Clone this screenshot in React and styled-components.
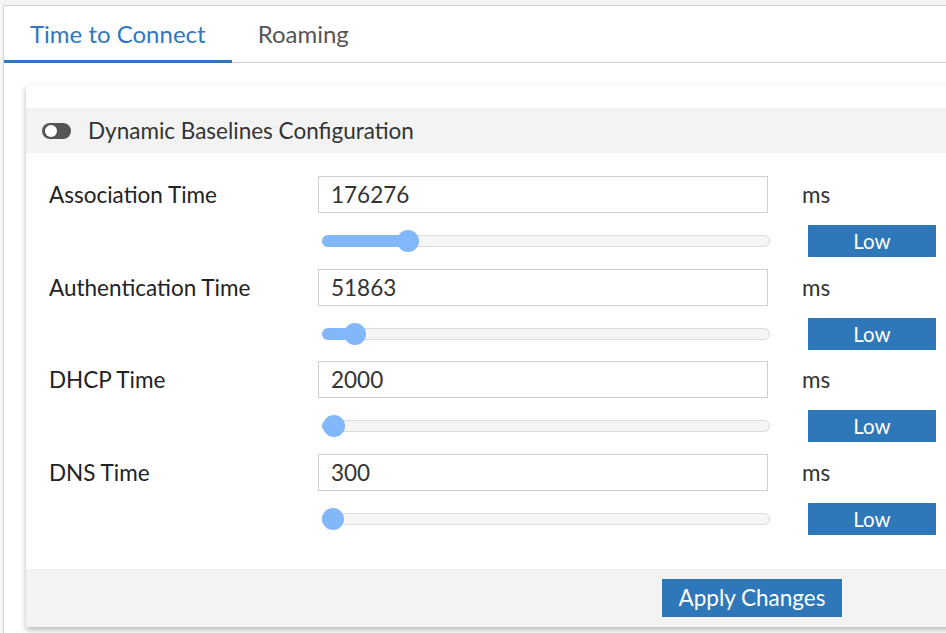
import React, { useState } from "react";
import styled, { createGlobalStyle } from "styled-components";

const GlobalStyle = createGlobalStyle`
  body {
    margin: 0;
    background: #f4f4f4;
    font-family: "Lato", "Liberation Sans", sans-serif;
    overflow: hidden;
  }
`;

const Frame = styled.div`
  margin: 5px 0 0 3px;
  width: 1100px;
  height: 640px;
  background: #fff;
  border-left: 1px solid #cfcfcf;
  border-top: 1px solid #cfcfcf;
`;

const TabBar = styled.div`
  display: flex;
  height: 56px;
  border-bottom: 1px solid #cfcfcf;
`;

const Tab = styled.div`
  display: flex;
  align-items: center;
  padding: 0 26px;
  margin-bottom: -1px;
  font-size: 24px;
  color: ${(p) => (p.$active ? "#2f78bf" : "#555")};
  border-bottom: 3px solid ${(p) => (p.$active ? "#2f78bf" : "transparent")};
  cursor: pointer;
`;

const Card = styled.div`
  margin: 22px 0 0 22px;
  padding-top: 23px;
  background: #fff;
  box-shadow: 0 3px 6px rgba(0, 0, 0, 0.28);
`;

const Header = styled.div`
  display: flex;
  align-items: center;
  gap: 17px;
  height: 45px;
  padding-left: 16px;
  background: #f3f3f3;
  font-size: 22.5px;
  color: #333;
`;

const Toggle = styled.div`
  position: relative;
  width: 29px;
  height: 16px;
  border-radius: 8px;
  background: #555;

  &::after {
    content: "";
    position: absolute;
    left: 3px;
    top: 2px;
    width: 12px;
    height: 12px;
    border-radius: 50%;
    background: #fff;
  }
`;

const Body = styled.div`
  display: flex;
  flex-direction: column;
  gap: 11.67px;
  padding: 23px 0 34px 23px;
`;

const Field = styled.div`
  display: grid;
  grid-template-columns: 269px 450px 174px;
  grid-template-rows: 37px 32px;
  row-gap: 12px;
  align-items: center;
`;

const Label = styled.div`
  font-size: 22.5px;
  color: #222;
`;

const Input = styled.input`
  box-sizing: border-box;
  width: 450px;
  height: 37px;
  padding: 0 12px;
  border: 1px solid #cfcfcf;
  font-family: "Lato", "Liberation Sans", sans-serif;
  font-size: 22.5px;
  color: #333;
  outline: none;
`;

const Unit = styled.div`
  margin-left: 34px;
  font-size: 22.5px;
  color: #333;
`;

const Track = styled.div`
  grid-column: 2;
  position: relative;
  box-sizing: border-box;
  width: 448px;
  height: 12px;
  margin-left: 4px;
  border: 1px solid #dcdcdc;
  border-radius: 6px;
  background: #f5f5f5;
`;

const Fill = styled.div`
  position: absolute;
  left: -1px;
  top: -1px;
  height: 12px;
  border-radius: 6px;
  background: #82b8f9;
`;

const Thumb = styled.div`
  position: absolute;
  top: -6px;
  width: 22px;
  height: 22px;
  border-radius: 50%;
  background: #82b8f9;
`;

const LevelButton = styled.button`
  grid-column: 3;
  width: 128px;
  height: 32px;
  margin-left: 40px;
  padding: 0;
  border: none;
  background: #2e77b9;
  color: #fff;
  font-family: "Lato", "Liberation Sans", sans-serif;
  font-size: 20.5px;
`;

const Footer = styled.div`
  display: flex;
  align-items: center;
  height: 58px;
  padding-left: 636px;
  background: #f3f3f3;
`;

const ApplyButton = styled.button`
  height: 38px;
  width: 180px;
  padding: 0;
  border: none;
  background: #2e77b9;
  color: #fff;
  font-family: "Lato", "Liberation Sans", sans-serif;
  font-size: 22.5px;
`;

const MAX = 1000000;

const fields = [
  { label: "Association Time", value: 176276 },
  { label: "Authentication Time", value: 51863 },
  { label: "DHCP Time", value: 2000 },
  { label: "DNS Time", value: 300 },
];

function Slider({ value }) {
  const frac = Math.min(1, value / MAX);
  const left = frac * (448 - 22);
  return (
    <Track>
      <Fill style={{ width: left + 12 }} />
      <Thumb style={{ left: left - 1 }} />
    </Track>
  );
}

export default function App() {
  const [tab, setTab] = useState("ttc");

  return (
    <>
      <GlobalStyle />
      <Frame>
        <TabBar>
          <Tab $active={tab === "ttc"} onClick={() => setTab("ttc")}>
            Time to Connect
          </Tab>
          <Tab $active={tab === "roam"} onClick={() => setTab("roam")}>
            Roaming
          </Tab>
        </TabBar>
        <Card>
          <Header>
            <Toggle />
            Dynamic Baselines Configuration
          </Header>
          <Body>
            {fields.map((f) => (
              <Field key={f.label}>
                <Label>{f.label}</Label>
                <Input defaultValue={f.value} />
                <Unit>ms</Unit>
                <Slider value={f.value} />
                <LevelButton>Low</LevelButton>
              </Field>
            ))}
          </Body>
          <Footer>
            <ApplyButton>Apply Changes</ApplyButton>
          </Footer>
        </Card>
      </Frame>
    </>
  );
}
